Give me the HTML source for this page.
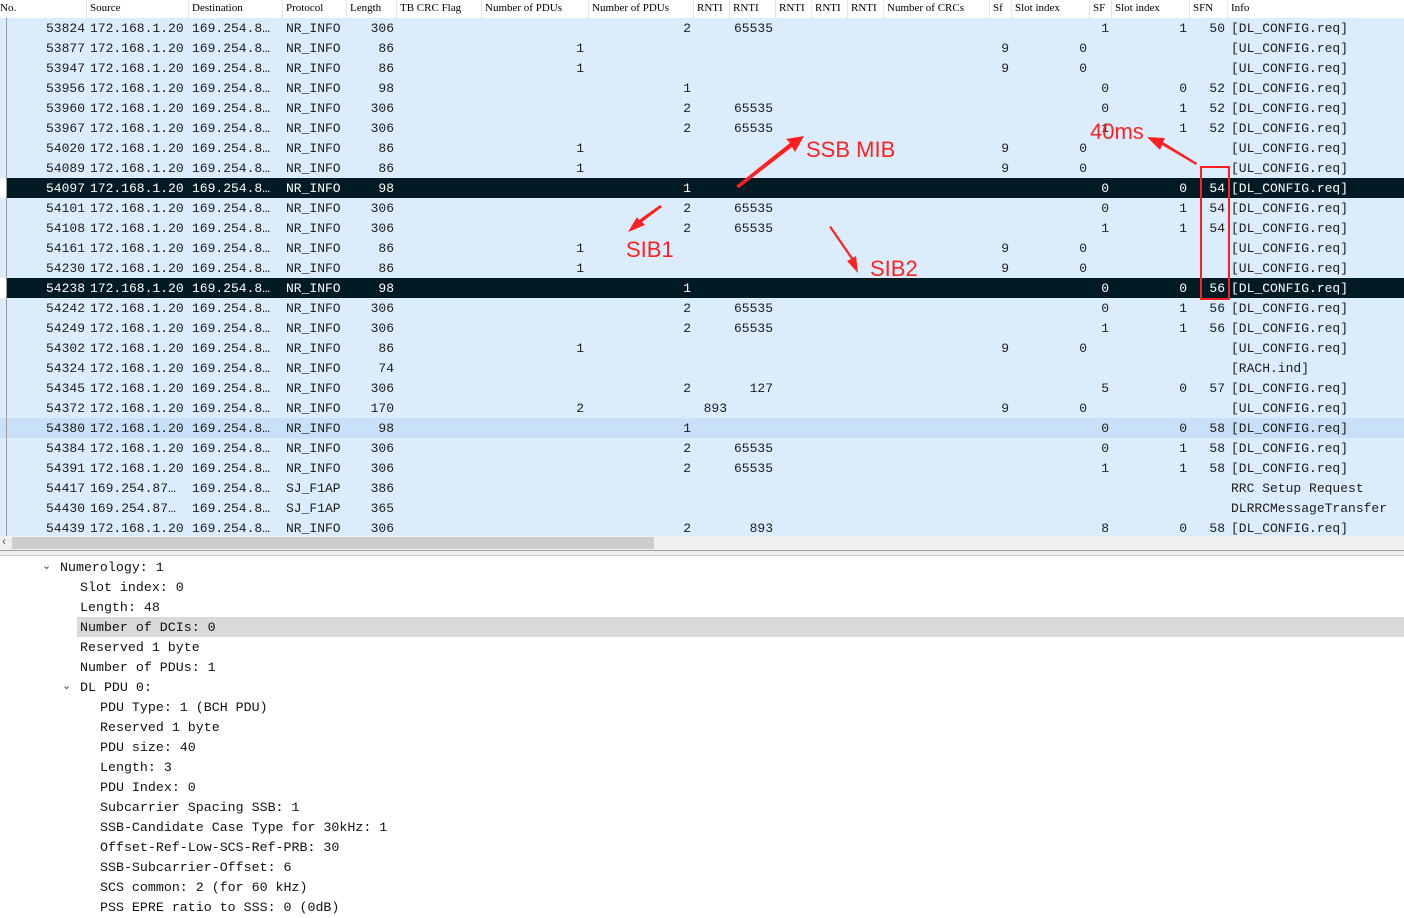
<!DOCTYPE html>
<html><head><meta charset="utf-8"><style>
body{margin:0;width:1404px;height:911px;overflow:hidden;background:#fff;position:relative;font-family:"Liberation Mono",monospace}
.hd{position:absolute;top:0;left:0;width:1404px;height:18px;background:#fff;border-bottom:1px solid #e0e0e0;font-family:"Liberation Serif",serif;font-size:11px;color:#000}
.hd span{position:absolute;top:2px;white-space:nowrap}
.hd i{position:absolute;top:0;width:1px;height:18px;background:#e5e5e5}
.r{position:absolute;left:0;width:1404px;height:20px;background:#dbedfd;font-size:13px;color:#1c1c1c;line-height:21px}
.r.s{background:#011b25;color:#fff;left:7px}
.r.s span{margin-left:-7px}
.r.h{background:#c9e1f8}
.r span{position:absolute;top:0;white-space:pre}
.n{left:0;width:85px;text-align:right}.src{left:90px}.dst{left:192px}.pr{left:286px}
.ln{left:340px;width:54px;text-align:right}
.p1{left:560px;width:24px;text-align:right}.p2{left:660px;width:31px;text-align:right}
.ra{left:690px;width:37px;text-align:right}.rb{left:720px;width:53px;text-align:right}
.sf{left:990px;width:19px;text-align:right}.sl{left:1060px;width:27px;text-align:right}
.SF{left:1090px;width:19px;text-align:right}.sl2{left:1160px;width:27px;text-align:right}
.fn{left:1195px;width:30px;text-align:right}.inf{left:1231px}
.gut{position:absolute;left:6px;top:18px;width:1px;height:518px;background:#9a9a9a}
.dt{position:absolute;left:0;width:1404px;height:20px;font-size:13.3px;line-height:21px;color:#111;white-space:pre}
.dt span{position:absolute;top:0}
.ann{position:absolute;color:#ff2222;font-family:"Liberation Sans",sans-serif;font-size:22px;line-height:22px}
</style></head><body>
<div class="hd">
<span style="left:0">No.</span><span style="left:90px">Source</span><span style="left:192px">Destination</span><span style="left:286px">Protocol</span><span style="left:350px">Length</span><span style="left:400px">TB CRC Flag</span><span style="left:485px">Number of PDUs</span><span style="left:592px">Number of PDUs</span><span style="left:697px">RNTI</span><span style="left:733px">RNTI</span><span style="left:779px">RNTI</span><span style="left:815px">RNTI</span><span style="left:851px">RNTI</span><span style="left:887px">Number of CRCs</span><span style="left:993px">Sf</span><span style="left:1015px">Slot index</span><span style="left:1093px">SF</span><span style="left:1115px">Slot index</span><span style="left:1193px">SFN</span><span style="left:1231px">Info</span>
<i style="left:86px"></i><i style="left:188px"></i><i style="left:282px"></i><i style="left:346px"></i><i style="left:396px"></i><i style="left:481px"></i><i style="left:588px"></i><i style="left:693px"></i><i style="left:729px"></i><i style="left:775px"></i><i style="left:811px"></i><i style="left:847px"></i><i style="left:883px"></i><i style="left:989px"></i><i style="left:1011px"></i><i style="left:1089px"></i><i style="left:1111px"></i><i style="left:1189px"></i><i style="left:1227px"></i>
</div>

<div class="r" style="top:18px"><span class="n">53824</span><span class="src">172.168.1.20</span><span class="dst">169.254.8…</span><span class="pr">NR_INFO</span><span class="ln">306</span><span class="p2">2</span><span class="rb">65535</span><span class="SF">1</span><span class="sl2">1</span><span class="fn">50</span><span class="inf">[DL_CONFIG.req]</span></div>
<div class="r" style="top:38px"><span class="n">53877</span><span class="src">172.168.1.20</span><span class="dst">169.254.8…</span><span class="pr">NR_INFO</span><span class="ln">86</span><span class="p1">1</span><span class="sf">9</span><span class="sl">0</span><span class="inf">[UL_CONFIG.req]</span></div>
<div class="r" style="top:58px"><span class="n">53947</span><span class="src">172.168.1.20</span><span class="dst">169.254.8…</span><span class="pr">NR_INFO</span><span class="ln">86</span><span class="p1">1</span><span class="sf">9</span><span class="sl">0</span><span class="inf">[UL_CONFIG.req]</span></div>
<div class="r" style="top:78px"><span class="n">53956</span><span class="src">172.168.1.20</span><span class="dst">169.254.8…</span><span class="pr">NR_INFO</span><span class="ln">98</span><span class="p2">1</span><span class="SF">0</span><span class="sl2">0</span><span class="fn">52</span><span class="inf">[DL_CONFIG.req]</span></div>
<div class="r" style="top:98px"><span class="n">53960</span><span class="src">172.168.1.20</span><span class="dst">169.254.8…</span><span class="pr">NR_INFO</span><span class="ln">306</span><span class="p2">2</span><span class="rb">65535</span><span class="SF">0</span><span class="sl2">1</span><span class="fn">52</span><span class="inf">[DL_CONFIG.req]</span></div>
<div class="r" style="top:118px"><span class="n">53967</span><span class="src">172.168.1.20</span><span class="dst">169.254.8…</span><span class="pr">NR_INFO</span><span class="ln">306</span><span class="p2">2</span><span class="rb">65535</span><span class="SF">1</span><span class="sl2">1</span><span class="fn">52</span><span class="inf">[DL_CONFIG.req]</span></div>
<div class="r" style="top:138px"><span class="n">54020</span><span class="src">172.168.1.20</span><span class="dst">169.254.8…</span><span class="pr">NR_INFO</span><span class="ln">86</span><span class="p1">1</span><span class="sf">9</span><span class="sl">0</span><span class="inf">[UL_CONFIG.req]</span></div>
<div class="r" style="top:158px"><span class="n">54089</span><span class="src">172.168.1.20</span><span class="dst">169.254.8…</span><span class="pr">NR_INFO</span><span class="ln">86</span><span class="p1">1</span><span class="sf">9</span><span class="sl">0</span><span class="inf">[UL_CONFIG.req]</span></div>
<div class="r s" style="top:178px"><span class="n">54097</span><span class="src">172.168.1.20</span><span class="dst">169.254.8…</span><span class="pr">NR_INFO</span><span class="ln">98</span><span class="p2">1</span><span class="SF">0</span><span class="sl2">0</span><span class="fn">54</span><span class="inf">[DL_CONFIG.req]</span></div>
<div class="r" style="top:198px"><span class="n">54101</span><span class="src">172.168.1.20</span><span class="dst">169.254.8…</span><span class="pr">NR_INFO</span><span class="ln">306</span><span class="p2">2</span><span class="rb">65535</span><span class="SF">0</span><span class="sl2">1</span><span class="fn">54</span><span class="inf">[DL_CONFIG.req]</span></div>
<div class="r" style="top:218px"><span class="n">54108</span><span class="src">172.168.1.20</span><span class="dst">169.254.8…</span><span class="pr">NR_INFO</span><span class="ln">306</span><span class="p2">2</span><span class="rb">65535</span><span class="SF">1</span><span class="sl2">1</span><span class="fn">54</span><span class="inf">[DL_CONFIG.req]</span></div>
<div class="r" style="top:238px"><span class="n">54161</span><span class="src">172.168.1.20</span><span class="dst">169.254.8…</span><span class="pr">NR_INFO</span><span class="ln">86</span><span class="p1">1</span><span class="sf">9</span><span class="sl">0</span><span class="inf">[UL_CONFIG.req]</span></div>
<div class="r" style="top:258px"><span class="n">54230</span><span class="src">172.168.1.20</span><span class="dst">169.254.8…</span><span class="pr">NR_INFO</span><span class="ln">86</span><span class="p1">1</span><span class="sf">9</span><span class="sl">0</span><span class="inf">[UL_CONFIG.req]</span></div>
<div class="r s" style="top:278px"><span class="n">54238</span><span class="src">172.168.1.20</span><span class="dst">169.254.8…</span><span class="pr">NR_INFO</span><span class="ln">98</span><span class="p2">1</span><span class="SF">0</span><span class="sl2">0</span><span class="fn">56</span><span class="inf">[DL_CONFIG.req]</span></div>
<div class="r" style="top:298px"><span class="n">54242</span><span class="src">172.168.1.20</span><span class="dst">169.254.8…</span><span class="pr">NR_INFO</span><span class="ln">306</span><span class="p2">2</span><span class="rb">65535</span><span class="SF">0</span><span class="sl2">1</span><span class="fn">56</span><span class="inf">[DL_CONFIG.req]</span></div>
<div class="r" style="top:318px"><span class="n">54249</span><span class="src">172.168.1.20</span><span class="dst">169.254.8…</span><span class="pr">NR_INFO</span><span class="ln">306</span><span class="p2">2</span><span class="rb">65535</span><span class="SF">1</span><span class="sl2">1</span><span class="fn">56</span><span class="inf">[DL_CONFIG.req]</span></div>
<div class="r" style="top:338px"><span class="n">54302</span><span class="src">172.168.1.20</span><span class="dst">169.254.8…</span><span class="pr">NR_INFO</span><span class="ln">86</span><span class="p1">1</span><span class="sf">9</span><span class="sl">0</span><span class="inf">[UL_CONFIG.req]</span></div>
<div class="r" style="top:358px"><span class="n">54324</span><span class="src">172.168.1.20</span><span class="dst">169.254.8…</span><span class="pr">NR_INFO</span><span class="ln">74</span><span class="inf">[RACH.ind]</span></div>
<div class="r" style="top:378px"><span class="n">54345</span><span class="src">172.168.1.20</span><span class="dst">169.254.8…</span><span class="pr">NR_INFO</span><span class="ln">306</span><span class="p2">2</span><span class="rb">127</span><span class="SF">5</span><span class="sl2">0</span><span class="fn">57</span><span class="inf">[DL_CONFIG.req]</span></div>
<div class="r" style="top:398px"><span class="n">54372</span><span class="src">172.168.1.20</span><span class="dst">169.254.8…</span><span class="pr">NR_INFO</span><span class="ln">170</span><span class="p1">2</span><span class="ra">893</span><span class="sf">9</span><span class="sl">0</span><span class="inf">[UL_CONFIG.req]</span></div>
<div class="r h" style="top:418px"><span class="n">54380</span><span class="src">172.168.1.20</span><span class="dst">169.254.8…</span><span class="pr">NR_INFO</span><span class="ln">98</span><span class="p2">1</span><span class="SF">0</span><span class="sl2">0</span><span class="fn">58</span><span class="inf">[DL_CONFIG.req]</span></div>
<div class="r" style="top:438px"><span class="n">54384</span><span class="src">172.168.1.20</span><span class="dst">169.254.8…</span><span class="pr">NR_INFO</span><span class="ln">306</span><span class="p2">2</span><span class="rb">65535</span><span class="SF">0</span><span class="sl2">1</span><span class="fn">58</span><span class="inf">[DL_CONFIG.req]</span></div>
<div class="r" style="top:458px"><span class="n">54391</span><span class="src">172.168.1.20</span><span class="dst">169.254.8…</span><span class="pr">NR_INFO</span><span class="ln">306</span><span class="p2">2</span><span class="rb">65535</span><span class="SF">1</span><span class="sl2">1</span><span class="fn">58</span><span class="inf">[DL_CONFIG.req]</span></div>
<div class="r" style="top:478px"><span class="n">54417</span><span class="src">169.254.87…</span><span class="dst">169.254.8…</span><span class="pr">SJ_F1AP</span><span class="ln">386</span><span class="inf">RRC Setup Request</span></div>
<div class="r" style="top:498px"><span class="n">54430</span><span class="src">169.254.87…</span><span class="dst">169.254.8…</span><span class="pr">SJ_F1AP</span><span class="ln">365</span><span class="inf">DLRRCMessageTransfer</span></div>
<div class="r" style="top:518px;height:18px;overflow:hidden"><span class="n">54439</span><span class="src">172.168.1.20</span><span class="dst">169.254.8…</span><span class="pr">NR_INFO</span><span class="ln">306</span><span class="p2">2</span><span class="rb">893</span><span class="SF">8</span><span class="sl2">0</span><span class="fn">58</span><span class="inf">[DL_CONFIG.req]</span></div>
<div class="gut"></div>

<div style="position:absolute;top:536px;left:0;width:1404px;height:14px;background:#f0f0f0"></div>
<div style="position:absolute;top:537px;left:12px;width:642px;height:12px;background:#cdcdcd"></div>
<div style="position:absolute;top:534px;left:2px;font-family:'Liberation Sans',sans-serif;font-size:12px;color:#555">‹</div>
<div style="position:absolute;top:550px;left:0;width:1404px;height:6px;background:#f0f0f0;border-top:1px solid #a0a0a0;border-bottom:1px solid #c8c8c8;box-sizing:border-box"></div>

<div class="dt" style="top:557px"><span style="left:42px;font-size:11px;color:#444">&#8964;</span><span style="left:60px">Numerology: 1</span></div>
<div class="dt" style="top:577px"><span style="left:80px">Slot index: 0</span></div>
<div class="dt" style="top:597px"><span style="left:80px">Length: 48</span></div>
<div class="dt" style="top:617px;background:linear-gradient(to right,#fff 77px,#d9d9d9 77px)"><span style="left:80px">Number of DCIs: 0</span></div>
<div class="dt" style="top:637px"><span style="left:80px">Reserved 1 byte</span></div>
<div class="dt" style="top:657px"><span style="left:80px">Number of PDUs: 1</span></div>
<div class="dt" style="top:677px"><span style="left:62px;font-size:11px;color:#444">&#8964;</span><span style="left:80px">DL PDU 0:</span></div>
<div class="dt" style="top:697px"><span style="left:100px">PDU Type: 1 (BCH PDU)</span></div>
<div class="dt" style="top:717px"><span style="left:100px">Reserved 1 byte</span></div>
<div class="dt" style="top:737px"><span style="left:100px">PDU size: 40</span></div>
<div class="dt" style="top:757px"><span style="left:100px">Length: 3</span></div>
<div class="dt" style="top:777px"><span style="left:100px">PDU Index: 0</span></div>
<div class="dt" style="top:797px"><span style="left:100px">Subcarrier Spacing SSB: 1</span></div>
<div class="dt" style="top:817px"><span style="left:100px">SSB-Candidate Case Type for 30kHz: 1</span></div>
<div class="dt" style="top:837px"><span style="left:100px">Offset-Ref-Low-SCS-Ref-PRB: 30</span></div>
<div class="dt" style="top:857px"><span style="left:100px">SSB-Subcarrier-Offset: 6</span></div>
<div class="dt" style="top:877px"><span style="left:100px">SCS common: 2 (for 60 kHz)</span></div>
<div class="dt" style="top:897px"><span style="left:100px">PSS EPRE ratio to SSS: 0 (0dB)</span></div>

<svg style="position:absolute;left:0;top:0" width="1404" height="911">
<g fill="#ff2020">
<polygon points="736,186 790,143 786,139 804,136 795,152 792,147 739,188"/>
<polygon points="1196,165 1162,145 1160,150 1147,137 1165,138 1163,142 1197,163"/>
<polygon points="662,207 642,222 645,225 628,232 637,217 639,220 660,205"/>
<polygon points="829,227 851,259 847,261 858,273 856,256 853,258 831,226"/>
</g>
<rect x="1201" y="167" width="28" height="132" fill="none" stroke="#ff2020" stroke-width="2"/>
</svg>
<div class="ann" style="left:806px;top:139px">SSB MIB</div>
<div class="ann" style="left:1090px;top:121px">40ms</div>
<div class="ann" style="left:626px;top:239px">SIB1</div>
<div class="ann" style="left:870px;top:258px">SIB2</div>
</body></html>
